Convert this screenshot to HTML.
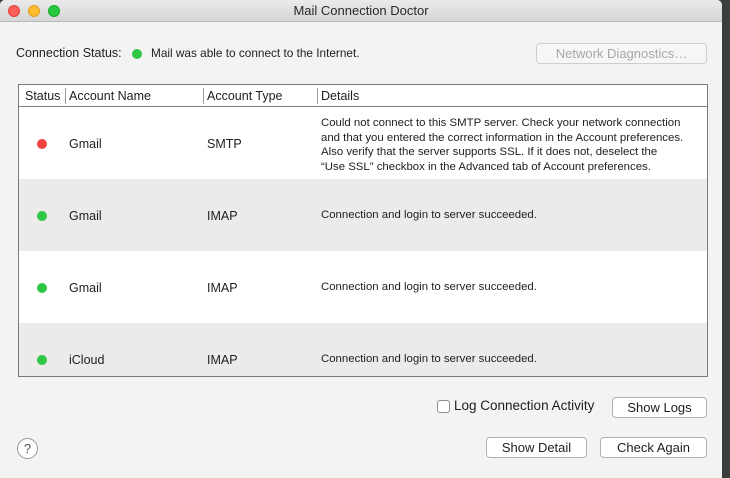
<!DOCTYPE html>
<html><head><style>
*{margin:0;padding:0;box-sizing:border-box}
body{width:730px;height:478px;background:#3a3f3c;font-family:"Liberation Sans",sans-serif;font-size:12.5px;color:#1e1e1e;position:relative;overflow:hidden}
.win{position:absolute;left:0;top:0;width:722px;height:478px;background:#f3f3f3;border-radius:5px 5px 0 0;overflow:hidden}
.title{height:22px;background:linear-gradient(#ebebeb,#d6d6d6);border-bottom:1px solid #b9b9b9;text-align:center;font-size:13px;line-height:22px;color:#2a2a2a}
.tl{position:absolute;top:5px;width:12px;height:12px;border-radius:50%}
.a{position:absolute;white-space:nowrap}
.dot{position:absolute;width:10px;height:10px;border-radius:50%}
.g{background:#2ec645}.r{background:#f1423e}
.table{position:absolute;left:18px;top:84px;width:690px;height:293px;border:1px solid #7a7a7a;background:#fff;overflow:hidden}
.hdr{position:absolute;left:0;top:0;width:100%;height:22px;border-bottom:1px solid #808080;background:#fff}
.sep{position:absolute;top:3px;width:1px;height:16px;background:#999}
.row{position:absolute;left:0;width:100%;height:72px}
.d{font-size:11.4px}
.btn{position:absolute;height:21px;border:1px solid #b1b1b1;border-radius:4px;background:#fff;text-align:center;line-height:19px;font-size:13px}
</style></head><body>
<div class="win">
<div class="title">Mail Connection Doctor</div>
<div class="tl" style="left:8px;background:#fc5f57;border:1px solid #e0443e"></div>
<div class="tl" style="left:28px;background:#fdbc2e;border:1px solid #dea123"></div>
<div class="tl" style="left:48px;background:#28c840;border:1px solid #1aab29"></div>

<div class="a" style="left:16px;top:46px">Connection Status:</div>
<div class="dot g" style="left:132px;top:49px"></div>
<div class="a" style="left:151px;top:46px;font-size:11.8px">Mail was able to connect to the Internet.</div>
<div class="btn" style="left:536px;top:43px;width:171px;color:#a8a8a8;border-color:#cfcfcf;background:#f6f6f6">Network Diagnostics…</div>

<div class="table">
<div class="hdr">
<div class="a" style="left:6px;top:4px">Status</div><div class="sep" style="left:46px"></div>
<div class="a" style="left:50px;top:4px">Account Name</div><div class="sep" style="left:184px"></div>
<div class="a" style="left:188px;top:4px">Account Type</div><div class="sep" style="left:298px"></div>
<div class="a" style="left:302px;top:4px">Details</div>
</div>
<div class="row" style="top:22px;background:#fff">
<div class="dot r" style="left:18px;top:32px"></div>
<div class="a" style="left:50px;top:30px">Gmail</div>
<div class="a" style="left:188px;top:30px">SMTP</div>
<div class="a d" style="left:302px;top:9px;line-height:14.5px">Could not connect to this SMTP server. Check your network connection<br>and that you entered the correct information in the Account preferences.<br>Also verify that the server supports SSL. If it does not, deselect the<br>“Use SSL” checkbox in the Advanced tab of Account preferences.</div>
</div>
<div class="row" style="top:94px;background:#ebebeb">
<div class="dot g" style="left:18px;top:32px"></div>
<div class="a" style="left:50px;top:30px">Gmail</div>
<div class="a" style="left:188px;top:30px">IMAP</div>
<div class="a d" style="left:302px;top:30px">Connection and login to server succeeded.</div>
</div>
<div class="row" style="top:166px;background:#fff">
<div class="dot g" style="left:18px;top:32px"></div>
<div class="a" style="left:50px;top:30px">Gmail</div>
<div class="a" style="left:188px;top:30px">IMAP</div>
<div class="a d" style="left:302px;top:30px">Connection and login to server succeeded.</div>
</div>
<div class="row" style="top:238px;background:#ebebeb">
<div class="dot g" style="left:18px;top:32px"></div>
<div class="a" style="left:50px;top:30px">iCloud</div>
<div class="a" style="left:188px;top:30px">IMAP</div>
<div class="a d" style="left:302px;top:30px">Connection and login to server succeeded.</div>
</div>
</div>

<div style="position:absolute;left:437px;top:400px;width:13px;height:13px;border:1px solid #8e8e8e;border-radius:3px;background:#fff"></div>
<div class="a" style="left:454px;top:398px;font-size:13.5px">Log Connection Activity</div>
<div class="btn" style="left:612px;top:397px;width:95px">Show Logs</div>
<div class="btn" style="left:486px;top:437px;width:101px">Show Detail</div>
<div class="btn" style="left:600px;top:437px;width:107px">Check Again</div>
<div style="position:absolute;left:17px;top:438px;width:21px;height:21px;border:1px solid #999;border-radius:50%;background:#fff;text-align:center;line-height:19px;font-size:13px;color:#555">?</div>
</div>
</body></html>
